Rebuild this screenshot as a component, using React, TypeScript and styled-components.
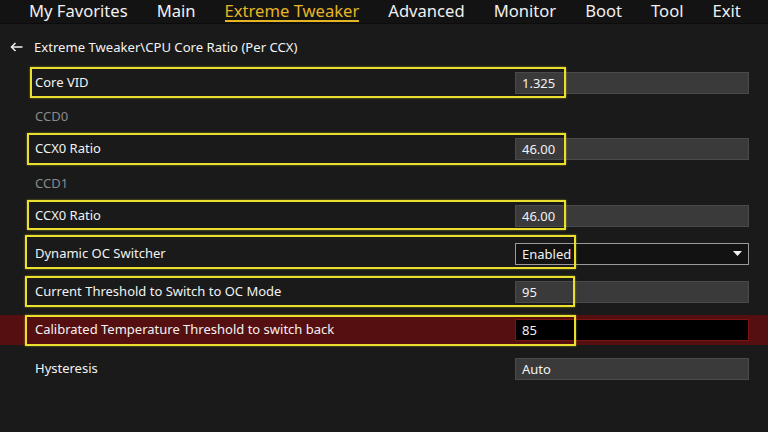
import React from 'react';
import styled, { createGlobalStyle } from 'styled-components';

const GlobalStyle = createGlobalStyle`
    html, body {
        margin: 0;
        padding: 0;
        background: #1a1a1a;
    }
    body {
        font-family: "Noto Sans", "Open Sans", sans-serif;
        color: #eeeeee;
    }
`;

const Screen = styled.div`
    width: 768px;
    height: 432px;
    overflow: hidden;
    background: #1a1a1a;
`;

// Top menu bar
const MenuBar = styled.nav`
    display: flex;
    align-items: flex-start;
    gap: 29px;
    height: 23px;
    padding-left: 29px;
    background: #131313;
    border-bottom: 1px solid #0c0c0c;
`;

const MenuItem = styled.span<{ $active?: boolean }>`
    position: relative;
    font-size: 16.6px;
    line-height: 22px;
    color: ${p => (p.$active ? '#e5b526' : '#f0f0f0')};
    white-space: nowrap;

    ${p => p.$active && `
        &::after {
            content: '';
            position: absolute;
            left: 0;
            right: 0;
            top: 20px;
            height: 2px;
            background: #e5b526;
        }
    `}
`;

const Crumb = styled.div`
    display: flex;
    align-items: center;
    gap: 11px;
    height: 24px;
    margin-top: 11px;
    padding-left: 10px;
    font-size: 13.1px;
    color: #f2f2f2;
`;

const List = styled.div`
    display: flex;
    flex-direction: column;
    gap: 8.2px;
    margin-top: 9px;
`;

const Row = styled.div<{ $selected?: boolean }>`
    position: relative;
    display: grid;
    grid-template-columns: 1fr 234px;
    align-items: center;
    height: 30px;
    padding: 0 19px 0 35px;
    background: ${p => (p.$selected ? '#560f10' : 'transparent')};
`;

const GroupTitle = styled.div`
    height: 20px;
    line-height: 20px;
    padding-left: 35px;
    font-size: 13px;
    color: #8a8a8a;
`;

const Label = styled.span`
    font-size: 13px;
    color: #f2f2f2;
    white-space: nowrap;
    margin-top: -2px;
`;

const ValueBox = styled.div<{ $selected?: boolean }>`
    box-sizing: border-box;
    height: 22px;
    padding: 0 6px;
    display: flex;
    align-items: center;
    font-size: 13px;
    color: #f2f2f2;
    background: ${p => (p.$selected ? '#000' : '#3a3a3a')};
    border: 1px solid ${p => (p.$selected ? '#7c1414' : '#4a4a4a')};
`;

const SelectBox = styled(ValueBox)`
    justify-content: space-between;
    background: #121212;
    border-color: #9a9a9a;
`;

// Yellow callout frame drawn over a row
const Callout = styled.div`
    position: absolute;
    box-sizing: border-box;
    border: 2px solid #e9df2c;
    box-shadow: 0 0 2px rgba(233, 223, 44, 0.5);
    pointer-events: none;
`;

type Frame = { left: number; right: number; top: number; height: number };

type Item =
    | { kind: 'group'; title: string }
    | {
          kind: 'field';
          label: string;
          value: string;
          select?: boolean;
          selected?: boolean;
          frame?: Frame;
      };

const tabs = ['My Favorites', 'Main', 'Extreme Tweaker', 'Advanced', 'Monitor', 'Boot', 'Tool', 'Exit'];

const items: Item[] = [
    { kind: 'field', label: 'Core VID', value: '1.325', frame: { left: 30, right: 566, top: -1, height: 31 } },
    { kind: 'group', title: 'CCD0' },
    { kind: 'field', label: 'CCX0 Ratio', value: '46.00', frame: { left: 27, right: 566, top: -1, height: 32 } },
    { kind: 'group', title: 'CCD1' },
    { kind: 'field', label: 'CCX0 Ratio', value: '46.00', frame: { left: 27, right: 566, top: -1, height: 30 } },
    { kind: 'field', label: 'Dynamic OC Switcher', value: 'Enabled', select: true, frame: { left: 25, right: 576, top: -3.5, height: 34 } },
    { kind: 'field', label: 'Current Threshold to Switch to OC Mode', value: '95', frame: { left: 25, right: 575, top: -1, height: 31 } },
    { kind: 'field', label: 'Calibrated Temperature Threshold to switch back', value: '85', selected: true, frame: { left: 25, right: 576, top: 0, height: 31 } },
    { kind: 'field', label: 'Hysteresis', value: 'Auto' },
];

const BackArrow = () => (
    <svg width="13" height="10" viewBox="0 0 13 10" fill="none" stroke="#f2f2f2" strokeWidth="1.5">
        <path d="M12.5 5H1.5" />
        <path d="M5.5 1L1.5 5L5.5 9" />
    </svg>
);

const Caret = () => (
    <svg width="9" height="5" viewBox="0 0 9 5">
        <path d="M0 0H9L4.5 5Z" fill="#f2f2f2" />
    </svg>
);

export default function App() {
    return (
        <Screen>
            <GlobalStyle />
            <MenuBar>
                {tabs.map(t => (
                    <MenuItem key={t} $active={t === 'Extreme Tweaker'}>
                        {t}
                    </MenuItem>
                ))}
            </MenuBar>
            <Crumb>
                <BackArrow />
                <span>Extreme Tweaker\CPU Core Ratio (Per CCX)</span>
            </Crumb>
            <List>
                {items.map((it, i) =>
                    it.kind === 'group' ? (
                        <GroupTitle key={i}>{it.title}</GroupTitle>
                    ) : (
                        <Row key={i} $selected={it.selected}>
                            <Label>{it.label}</Label>
                            {it.select ? (
                                <SelectBox>
                                    <span>{it.value}</span>
                                    <Caret />
                                </SelectBox>
                            ) : (
                                <ValueBox $selected={it.selected}>{it.value}</ValueBox>
                            )}
                            {it.frame && (
                                <Callout
                                    style={{
                                        left: it.frame.left,
                                        width: it.frame.right - it.frame.left,
                                        top: it.frame.top,
                                        height: it.frame.height,
                                    }}
                                />
                            )}
                        </Row>
                    )
                )}
            </List>
        </Screen>
    );
}
